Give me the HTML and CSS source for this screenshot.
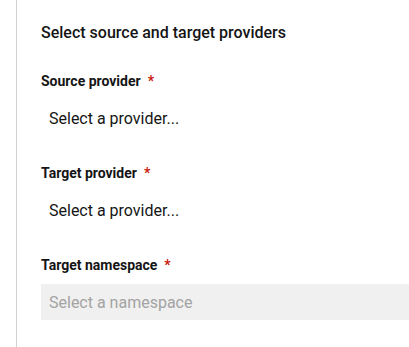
FILE: index.html
```html
<!DOCTYPE html>
<html>
<head>
<meta charset="utf-8">
<link rel="stylesheet" href="styles.css">
</head>
<body>
<div class="page">
  <div class="rail"></div>
  <main class="content">
    <h2 class="title">Select source and target providers</h2>
    <form class="form">
      <div class="group">
        <label class="label">Source provider<span class="req">*</span></label>
        <div class="select">Select a provider...</div>
      </div>
      <div class="group">
        <label class="label">Target provider<span class="req">*</span></label>
        <div class="select">Select a provider...</div>
      </div>
      <div class="group">
        <label class="label">Target namespace<span class="req">*</span></label>
        <div class="select disabled">Select a namespace</div>
      </div>
    </form>
  </main>
</div>
</body>
</html>
```
FILE: styles.css
```css
html, body {
  margin: 0;
  padding: 0;
  background: #fff;
}
body {
  font-family: Roboto, "Liberation Sans", sans-serif;
  color: #151515;
}
.page {
  display: flex;
  min-height: 347px;
}
.rail {
  width: 16px;
  border-right: 1px solid #d2d2d2;
  flex: none;
}
.content {
  flex: 1;
  padding: 21px 0 0 24px;
}
.title {
  margin: 0;
  font-size: 16px;
  font-weight: 500;
  line-height: 24px;
  letter-spacing: 0;
}
.form {
  display: flex;
  flex-direction: column;
  gap: 27px;
  margin-top: 26px;
}
.group {
  display: flex;
  flex-direction: column;
  gap: 8px;
}
.label {
  font-size: 14px;
  font-weight: 700;
  line-height: 21px;
}
.req {
  color: #c9190b;
  margin-left: 7px;
}
.select {
  height: 36px;
  display: flex;
  align-items: center;
  padding-left: 8px;
  font-size: 16px;
  color: #151515;
}
.select.disabled {
  background: #f0f0f0;
  color: #a3a3a3;
}
```
